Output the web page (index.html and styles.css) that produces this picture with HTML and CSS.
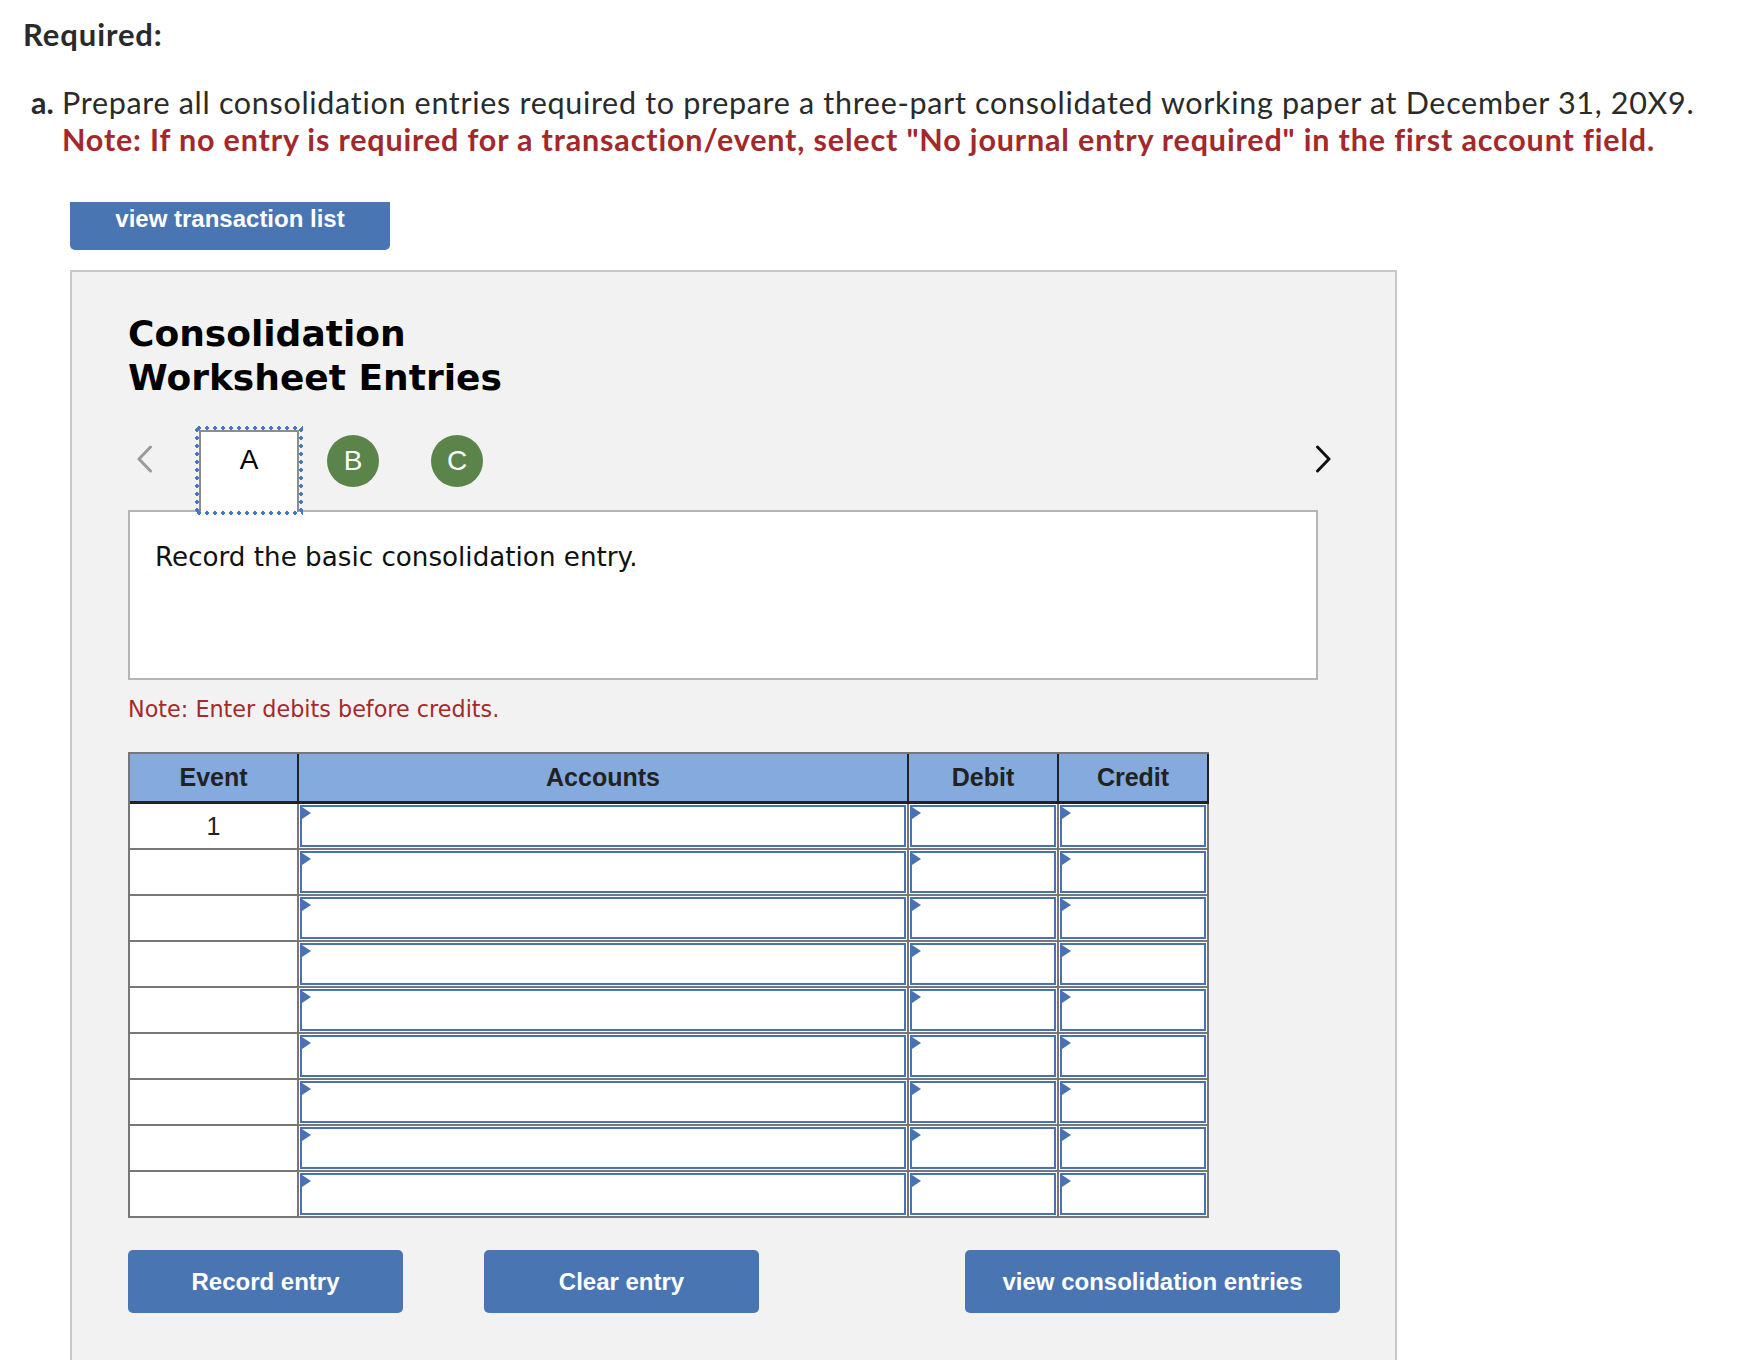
FILE: index.html
```html
<!DOCTYPE html>
<html lang="en">

<head>
  <meta charset="UTF-8">
  <meta name="viewport" content="width=device-width, initial-scale=1.0">
  <title>Consolidation Worksheet Entries</title>
  <link rel="stylesheet" href="styles.css">
</head>

<body>
  <div class="question">
    <p class="required">Required:</p>
    <div class="part">
      <span class="part-label">a.</span>
      <div class="part-body">
        <p>Prepare all consolidation entries required to prepare a three-part consolidated working paper at December 31, 20X9.</p>
        <p class="warning">Note: If no entry is required for a transaction/event, select "No journal entry required" in the first account field.</p>
      </div>
    </div>
    <button class="btn btn-list">view transaction list</button>
  </div>

  <div class="worksheet">
    <h2 class="ws-title">Consolidation Worksheet Entries</h2>

    <div class="tabs">
      <span class="nav nav-prev">
        <svg width="17" height="28" viewBox="0 0 17 28"><polyline points="14.5,2 3,14 14.5,26" fill="none" stroke="#9a9a9a" stroke-width="3" stroke-linecap="round" stroke-linejoin="round"/></svg>
      </span>
      <div class="tab-slot"><div class="tab-active">A</div></div>
      <div class="tab-slot"><span class="tab-dot">B</span></div>
      <div class="tab-slot"><span class="tab-dot">C</span></div>
      <span class="nav nav-next">
        <svg width="17" height="28" viewBox="0 0 17 28"><polyline points="2.5,2 14,14 2.5,26" fill="none" stroke="#111" stroke-width="3" stroke-linecap="round" stroke-linejoin="round"/></svg>
      </span>
    </div>

    <div class="prompt">Record the basic consolidation entry.</div>
    <p class="hint">Note: Enter debits before credits.</p>

    <div class="journal">
      <div class="jh">Event</div>
      <div class="jh">Accounts</div>
      <div class="jh">Debit</div>
      <div class="jh">Credit</div>

      <div class="jc jc-event">1</div>
      <div class="jc"><div class="field"></div></div>
      <div class="jc"><div class="field"></div></div>
      <div class="jc"><div class="field"></div></div>

      <div class="jc jc-event"></div>
      <div class="jc"><div class="field"></div></div>
      <div class="jc"><div class="field"></div></div>
      <div class="jc"><div class="field"></div></div>

      <div class="jc jc-event"></div>
      <div class="jc"><div class="field"></div></div>
      <div class="jc"><div class="field"></div></div>
      <div class="jc"><div class="field"></div></div>

      <div class="jc jc-event"></div>
      <div class="jc"><div class="field"></div></div>
      <div class="jc"><div class="field"></div></div>
      <div class="jc"><div class="field"></div></div>

      <div class="jc jc-event"></div>
      <div class="jc"><div class="field"></div></div>
      <div class="jc"><div class="field"></div></div>
      <div class="jc"><div class="field"></div></div>

      <div class="jc jc-event"></div>
      <div class="jc"><div class="field"></div></div>
      <div class="jc"><div class="field"></div></div>
      <div class="jc"><div class="field"></div></div>

      <div class="jc jc-event"></div>
      <div class="jc"><div class="field"></div></div>
      <div class="jc"><div class="field"></div></div>
      <div class="jc"><div class="field"></div></div>

      <div class="jc jc-event"></div>
      <div class="jc"><div class="field"></div></div>
      <div class="jc"><div class="field"></div></div>
      <div class="jc"><div class="field"></div></div>

      <div class="jc jc-event"></div>
      <div class="jc"><div class="field"></div></div>
      <div class="jc"><div class="field"></div></div>
      <div class="jc"><div class="field"></div></div>
    </div>

    <div class="actions">
      <button class="btn btn-action">Record entry</button>
      <button class="btn btn-action">Clear entry</button>
      <button class="btn btn-action btn-wide">view consolidation entries</button>
    </div>
  </div>
</body>

</html>
```

FILE: styles.css
```css
body {
  margin: 0;
  background-color: #fff;
  color: #2a2a2a;
  font-family: Lato, "Liberation Sans", sans-serif;
}

.question {
  padding-left: 23px;
}

.required {
  margin: 0;
  padding-top: 16px;
  font-size: 31px;
  font-weight: 700;
  line-height: 36px;
  letter-spacing: 0.9px;
}

.part {
  display: flex;
  margin: 32px 0 0 8px;
  font-size: 30.5px;
  line-height: 37px;
  letter-spacing: 0.69px;
}

.part-label {
  width: 31px;
  flex-shrink: 0;
  font-weight: 700;
  letter-spacing: 0;
}

.part-body p {
  margin: 0;
}

.part-body .warning {
  color: #a3282b;
  font-weight: 700;
  letter-spacing: 0.84px;
}

.btn {
  border: none;
  background-color: #4a75b3;
  color: #fff;
  font-family: "Liberation Sans", Arial, sans-serif;
  font-size: 24px;
  font-weight: 700;
  cursor: pointer;
}

.btn-list {
  display: block;
  width: 320px;
  height: 48px;
  margin: 44px 0 0 47px;
  padding: 3px 0 17px;
  line-height: 28px;
  border-radius: 0 0 5px 5px;
}

.worksheet {
  box-sizing: border-box;
  width: 1327px;
  margin: 20px 0 0 70px;
  padding: 40px 0 70px 56px;
  border: 2px solid #c8c8c8;
  background-color: #f2f2f2;
}

.ws-title {
  max-width: 420px;
  margin: 0;
  color: #000;
  font-family: "DejaVu Sans", Verdana, sans-serif;
  font-size: 36px;
  font-weight: 700;
  line-height: 44px;
}

.tabs {
  display: flex;
  align-items: flex-start;
  width: 1190px;
  height: 80px;
  margin-top: 30px;
}

.nav {
  display: block;
  width: 17px;
  height: 28px;
  margin-top: 15px;
}

.nav svg {
  display: block;
}

.nav-prev {
  margin-left: 8px;
  margin-right: 44px;
}

.nav-next {
  margin-left: auto;
  margin-right: -14px;
}

.tab-slot {
  display: flex;
  justify-content: center;
  width: 104px;
}

.tab-active {
  position: relative;
  z-index: 1;
  box-sizing: border-box;
  width: 100px;
  height: 82px;
  border: 2px solid #8c8c8c;
  border-bottom: none;
  background-color: #fff;
  color: #000;
  font-family: "Liberation Sans", Arial, sans-serif;
  font-size: 28px;
  line-height: 56px;
  text-align: center;
}

/* dotted focus ring round the current tab */
.tab-active::after {
  content: "";
  position: absolute;
  top: -6px;
  left: -6px;
  right: -6px;
  bottom: -3px;
  background:
    radial-gradient(circle, #4479c9 1.6px, transparent 2.1px) top left / 8px 4px repeat-x,
    radial-gradient(circle, #4479c9 1.6px, transparent 2.1px) bottom left / 8px 4px repeat-x,
    radial-gradient(circle, #4479c9 1.6px, transparent 2.1px) top left / 4px 8px repeat-y,
    radial-gradient(circle, #4479c9 1.6px, transparent 2.1px) top right / 4px 8px repeat-y;
  pointer-events: none;
}

.tab-dot {
  display: block;
  width: 52px;
  height: 52px;
  margin-top: 5px;
  border-radius: 50%;
  background-color: #5a8449;
  color: #fff;
  font-family: "Liberation Sans", Arial, sans-serif;
  font-size: 28px;
  line-height: 52px;
  text-align: center;
}

.prompt {
  box-sizing: border-box;
  width: 1190px;
  height: 170px;
  padding: 30px 25px;
  border: 2px solid #b5b5b5;
  background-color: #fff;
  color: #111;
  font-family: "DejaVu Sans", Verdana, sans-serif;
  font-size: 26.2px;
  line-height: 30px;
}

.hint {
  margin: 16px 0 0;
  color: #a52a2a;
  font-family: "DejaVu Sans", Verdana, sans-serif;
  font-size: 22.3px;
  line-height: 26px;
}

.journal {
  display: grid;
  grid-template-columns: 169px 610px 150px 150px;
  width: max-content;
  margin-top: 30px;
  border-top: 2px solid #777;
  border-left: 2px solid #777;
  font-family: "Liberation Sans", Arial, sans-serif;
  font-size: 25px;
  color: #222;
}

.jh {
  display: flex;
  align-items: center;
  justify-content: center;
  box-sizing: border-box;
  height: 50px;
  border-right: 2px solid #222;
  border-bottom: 3px solid #222;
  background-color: #84aade;
  font-weight: 700;
}

.jc {
  box-sizing: border-box;
  height: 46px;
  padding: 1px;
  border-right: 2px solid #777;
  border-bottom: 2px solid #777;
  background-color: #fff;
}

.jc-event {
  display: flex;
  align-items: center;
  justify-content: center;
}

.field {
  position: relative;
  box-sizing: border-box;
  height: 100%;
  border: 2px solid #4872b1;
}

.field::before {
  content: "";
  position: absolute;
  top: 0;
  left: 0;
  border-left: 9px solid #4872b1;
  border-top: 6.5px solid transparent;
  border-bottom: 6.5px solid transparent;
}

.actions {
  display: flex;
  gap: 81px;
  width: 1212px;
  margin-top: 32px;
}

.btn-action {
  width: 275px;
  height: 63px;
  border-radius: 5px;
}

.btn-wide {
  width: 375px;
  margin-left: auto;
}
```
